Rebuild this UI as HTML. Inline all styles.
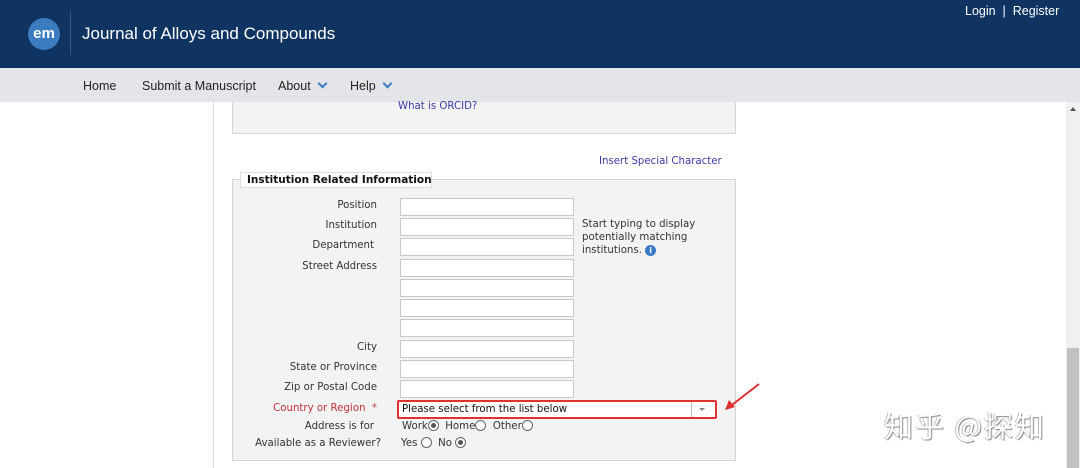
<!DOCTYPE html>
<html><head><meta charset="utf-8"><style>
*{margin:0;padding:0;box-sizing:border-box}
body{width:1080px;height:468px;overflow:hidden;background:#fff;position:relative;font-family:"DejaVu Sans","Liberation Sans",sans-serif;font-size:10.2px;color:#333}
.a{position:absolute;white-space:nowrap}
.hdr{position:absolute;left:0;top:0;width:1080px;height:68px;background:#0f3462}
.nav{position:absolute;left:0;top:68px;width:1080px;height:34px;background:#e3e5e8;font-family:"Liberation Sans",sans-serif;font-size:12.5px;color:#222}
.lbl{position:absolute;right:703px;white-space:nowrap;color:#333}
.inp{position:absolute;left:400px;width:174px;height:18px;background:#fff;border:1px solid #c8c8c8}
.rad{display:inline-block;width:11px;height:11px;border:1px solid #666;border-radius:50%;vertical-align:-2px;background:#fff;position:relative}
.rad.on::after{content:"";position:absolute;left:2px;top:2px;width:5px;height:5px;border-radius:50%;background:#555}
.chev{display:inline-block;width:7px;height:7px;border-right:2px solid #3a79c4;border-bottom:2px solid #3a79c4;transform:rotate(45deg);margin-left:8px;vertical-align:3px}
</style></head><body>
<div class="hdr">
 <div class="a" style="left:28px;top:18px;width:32px;height:32px;border-radius:50%;background:#3b7bc0;color:#fff;font-family:'Liberation Sans';font-weight:bold;font-size:15px;text-align:center;line-height:31px">em</div>
 <div class="a" style="left:70px;top:11px;width:1px;height:44px;background:#3c5a80"></div>
 <div class="a" style="left:82px;top:24px;color:#fff;font-family:'Liberation Sans';font-size:17px">Journal of Alloys and Compounds</div>
 <div class="a" style="left:965px;top:4px;color:#fff;font-family:'Liberation Sans';font-size:12.5px">Login &nbsp;|&nbsp; Register</div>
</div>
<div class="nav">
 <span class="a" style="left:83px;top:11px">Home</span>
 <span class="a" style="left:142px;top:11px">Submit a Manuscript</span>
 <span class="a" style="left:278px;top:11px">About<i class="chev"></i></span>
 <span class="a" style="left:350px;top:11px">Help<i class="chev"></i></span>
</div>
<div class="a" style="left:213px;top:102px;width:1px;height:366px;background:#ddd"></div>
<div class="a" style="left:1066px;top:102px;width:14px;height:366px;background:#f0f0f0"></div>
<div class="a" style="left:1067px;top:348px;width:12px;height:120px;background:#c1c1c1"></div>
<div class="a" style="left:1070px;top:107px;border:3px solid transparent;border-bottom:4px solid #555;border-top:none"></div>

<div class="a" style="left:232px;top:102px;width:504px;height:32px;background:#f3f3f3;border:1px solid #d4d4d4;border-top:none"></div>
<div class="a" style="left:398px;top:101px;color:#3a3aa8">What is ORCID?</div>
<div class="a" style="left:599px;top:156px;color:#3a3aa8">Insert Special Character</div>

<div class="a" style="left:232px;top:179px;width:504px;height:282px;background:#f3f3f3;border:1px solid #d4d4d4"></div>
<div class="a" style="left:240px;top:172px;width:192px;height:16px;background:#fff;border:1px solid #ddd;font-weight:bold;color:#111;padding-left:6px;line-height:14px;font-size:10.5px">Institution Related Information</div>

<div class="lbl" style="top:200px">Position</div>
<div class="lbl" style="top:220px">Institution</div>
<div class="lbl" style="top:240px;right:706px">Department</div>
<div class="lbl" style="top:261px">Street Address</div>
<div class="lbl" style="top:342px">City</div>
<div class="lbl" style="top:362px">State or Province</div>
<div class="lbl" style="top:382px">Zip or Postal Code</div>
<div class="lbl" style="top:403px;color:#c0303a">Country or Region &nbsp;*</div>
<div class="lbl" style="top:421px;right:706px">Address is for</div>
<div class="lbl" style="top:438px;right:699px">Available as a Reviewer?</div>

<div class="inp" style="top:198px"></div>
<div class="inp" style="top:218px"></div>
<div class="inp" style="top:238px"></div>
<div class="inp" style="top:259px"></div>
<div class="inp" style="top:279px"></div>
<div class="inp" style="top:299px"></div>
<div class="inp" style="top:319px"></div>
<div class="inp" style="top:340px"></div>
<div class="inp" style="top:360px"></div>
<div class="inp" style="top:380px"></div>
<div class="a" style="left:582px;top:218px;line-height:13px;color:#333">Start typing to display<br>potentially matching<br>institutions. <span style="display:inline-block;width:11px;height:11px;border-radius:50%;background:#3a78c8;color:#fff;font-size:8px;text-align:center;line-height:11px;font-weight:bold">i</span></div>

<div class="a" style="left:397px;top:400px;width:320px;height:19px;border:2px solid #e03030;border-radius:2px;background:#fff;color:#111;padding-left:3px;line-height:16px">Please select from the list below</div>
<div class="a" style="left:691px;top:402px;width:1px;height:15px;background:#bbb"></div>
<div class="a" style="left:699px;top:408px;border:3px solid transparent;border-top:3px solid #888;border-bottom:none"></div>
<svg class="a" style="left:722px;top:382px" width="40" height="30"><line x1="37" y1="2" x2="6" y2="26" stroke="#e03030" stroke-width="2"/><path d="M3 28 L7 18 L13 25 Z" fill="#e03030"/></svg>

<div class="a" style="left:402px;top:420px">Work<span class="rad on"></span> &nbsp;Home<span class="rad"></span> &nbsp;Other<span class="rad"></span></div>
<div class="a" style="left:401px;top:437px">Yes <span class="rad"></span> &nbsp;No <span class="rad on"></span></div>

<div class="a" style="left:884px;top:404px;font-family:'Noto Sans CJK SC',sans-serif;font-size:29px;letter-spacing:2px;color:#fff;text-shadow:1px 1px 1px #888,-1px 0 0 #bbb">知乎 @探知</div>
</body></html>
